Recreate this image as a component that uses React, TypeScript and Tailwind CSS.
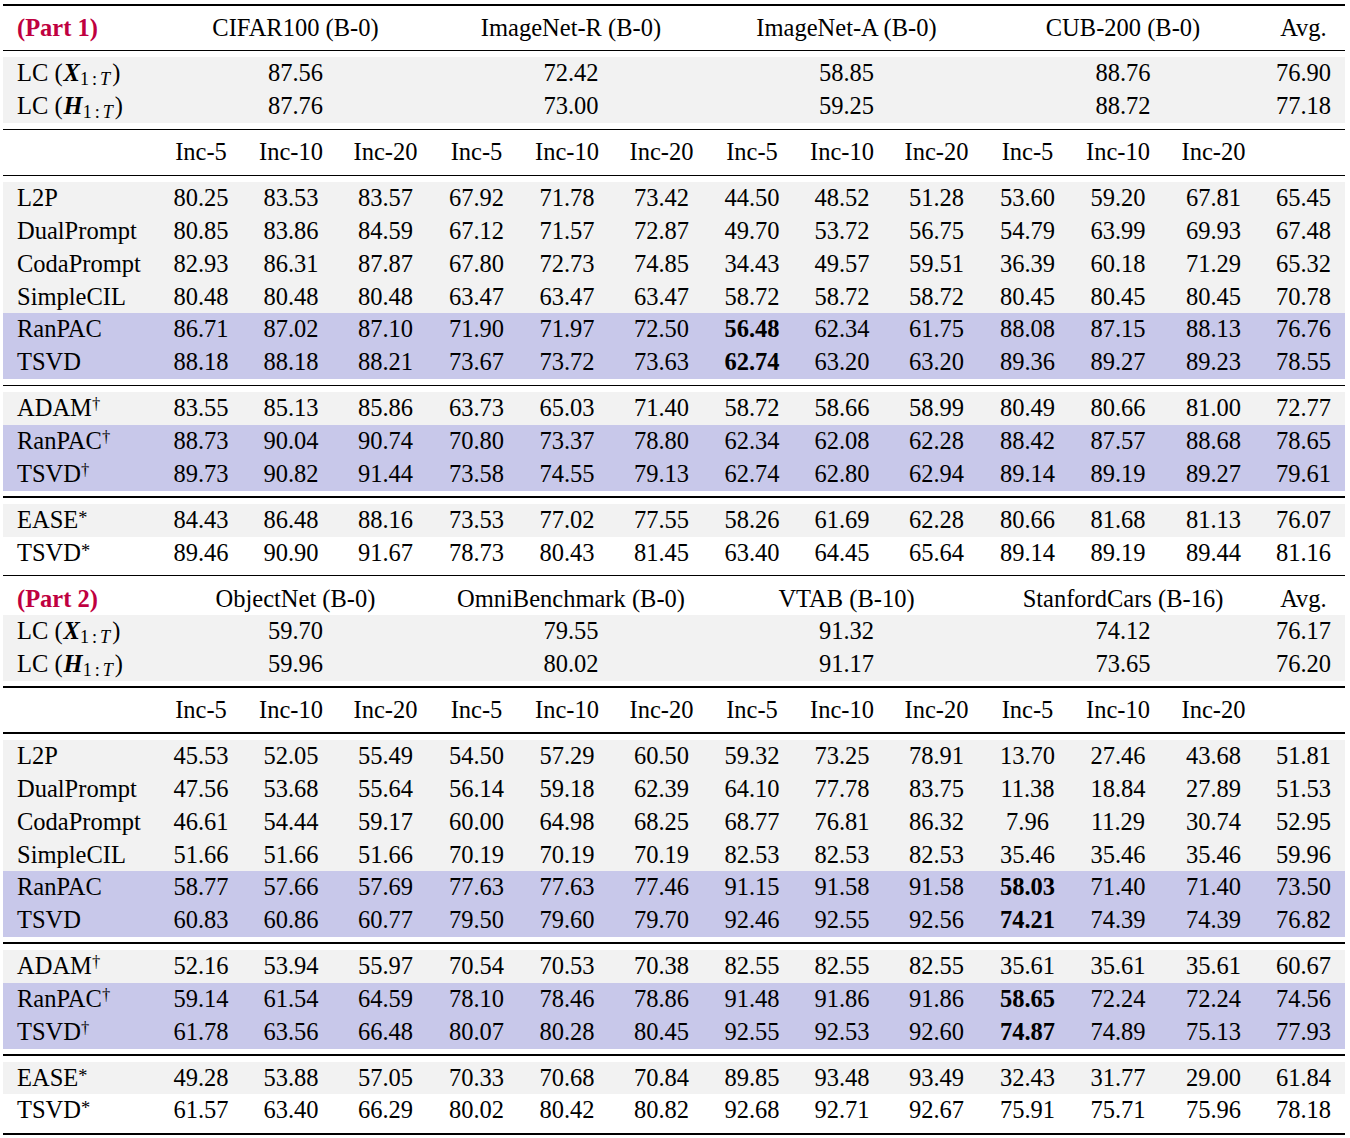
import React from "react";

const ROW =
  "grid grid-cols-[155px_86px_94px_95px_87px_94px_95px_86px_94px_95px_87px_94px_97px_83px] h-[32.8px] leading-[32.8px]";
const GRAY = "bg-[#f2f2f2]";
const PURPLE = "bg-[#c8c8ea]";

type Mark = "dag" | "ast" | undefined;
type DataRow = { name: string; mark?: Mark; vals: string[]; bg: string };

type Part = {
  label: string;
  datasets: string[];
  headerRule: boolean;
  lc: string[][];
  g1: DataRow[];
  g2: DataRow[];
  g3: DataRow[];
};

const r = (name: string, mark: Mark, s: string, bg: string): DataRow => ({
  name,
  mark,
  vals: s.split(" "),
  bg,
});

const part1: Part = {
  label: "(Part 1)",
  datasets: ["CIFAR100 (B-0)", "ImageNet-R (B-0)", "ImageNet-A (B-0)", "CUB-200 (B-0)"],
  headerRule: true,
  lc: [
    ["87.56", "72.42", "58.85", "88.76", "76.90"],
    ["87.76", "73.00", "59.25", "88.72", "77.18"],
  ],
  g1: [
    r("L2P", undefined, "80.25 83.53 83.57 67.92 71.78 73.42 44.50 48.52 51.28 53.60 59.20 67.81 65.45", GRAY),
    r("DualPrompt", undefined, "80.85 83.86 84.59 67.12 71.57 72.87 49.70 53.72 56.75 54.79 63.99 69.93 67.48", GRAY),
    r("CodaPrompt", undefined, "82.93 86.31 87.87 67.80 72.73 74.85 34.43 49.57 59.51 36.39 60.18 71.29 65.32", GRAY),
    r("SimpleCIL", undefined, "80.48 80.48 80.48 63.47 63.47 63.47 58.72 58.72 58.72 80.45 80.45 80.45 70.78", GRAY),
    r("RanPAC", undefined, "86.71 87.02 87.10 71.90 71.97 72.50 !56.48 62.34 61.75 88.08 87.15 88.13 76.76", PURPLE),
    r("TSVD", undefined, "88.18 88.18 88.21 73.67 73.72 73.63 !62.74 63.20 63.20 89.36 89.27 89.23 78.55", PURPLE),
  ],
  g2: [
    r("ADAM", "dag", "83.55 85.13 85.86 63.73 65.03 71.40 58.72 58.66 58.99 80.49 80.66 81.00 72.77", GRAY),
    r("RanPAC", "dag", "88.73 90.04 90.74 70.80 73.37 78.80 62.34 62.08 62.28 88.42 87.57 88.68 78.65", PURPLE),
    r("TSVD", "dag", "89.73 90.82 91.44 73.58 74.55 79.13 62.74 62.80 62.94 89.14 89.19 89.27 79.61", PURPLE),
  ],
  g3: [
    r("EASE", "ast", "84.43 86.48 88.16 73.53 77.02 77.55 58.26 61.69 62.28 80.66 81.68 81.13 76.07", GRAY),
    r("TSVD", "ast", "89.46 90.90 91.67 78.73 80.43 81.45 63.40 64.45 65.64 89.14 89.19 89.44 81.16", "bg-white"),
  ],
};

const part2: Part = {
  label: "(Part 2)",
  datasets: ["ObjectNet (B-0)", "OmniBenchmark (B-0)", "VTAB (B-10)", "StanfordCars (B-16)"],
  headerRule: false,
  lc: [
    ["59.70", "79.55", "91.32", "74.12", "76.17"],
    ["59.96", "80.02", "91.17", "73.65", "76.20"],
  ],
  g1: [
    r("L2P", undefined, "45.53 52.05 55.49 54.50 57.29 60.50 59.32 73.25 78.91 13.70 27.46 43.68 51.81", GRAY),
    r("DualPrompt", undefined, "47.56 53.68 55.64 56.14 59.18 62.39 64.10 77.78 83.75 11.38 18.84 27.89 51.53", GRAY),
    r("CodaPrompt", undefined, "46.61 54.44 59.17 60.00 64.98 68.25 68.77 76.81 86.32 7.96 11.29 30.74 52.95", GRAY),
    r("SimpleCIL", undefined, "51.66 51.66 51.66 70.19 70.19 70.19 82.53 82.53 82.53 35.46 35.46 35.46 59.96", GRAY),
    r("RanPAC", undefined, "58.77 57.66 57.69 77.63 77.63 77.46 91.15 91.58 91.58 !58.03 71.40 71.40 73.50", PURPLE),
    r("TSVD", undefined, "60.83 60.86 60.77 79.50 79.60 79.70 92.46 92.55 92.56 !74.21 74.39 74.39 76.82", PURPLE),
  ],
  g2: [
    r("ADAM", "dag", "52.16 53.94 55.97 70.54 70.53 70.38 82.55 82.55 82.55 35.61 35.61 35.61 60.67", GRAY),
    r("RanPAC", "dag", "59.14 61.54 64.59 78.10 78.46 78.86 91.48 91.86 91.86 !58.65 72.24 72.24 74.56", PURPLE),
    r("TSVD", "dag", "61.78 63.56 66.48 80.07 80.28 80.45 92.55 92.53 92.60 !74.87 74.89 75.13 77.93", PURPLE),
  ],
  g3: [
    r("EASE", "ast", "49.28 53.88 57.05 70.33 70.68 70.84 89.85 93.48 93.49 32.43 31.77 29.00 61.84", GRAY),
    r("TSVD", "ast", "61.57 63.40 66.29 80.02 80.42 80.82 92.68 92.71 92.67 75.91 75.71 75.96 78.18", "bg-white"),
  ],
};

function MidRule() {
  return <div className="mt-[5.5px] mb-[6.2px] h-[1.5px] bg-black" />;
}

function MethodName({ name, mark }: { name: string; mark?: Mark }) {
  return (
    <div className="pl-[14px] whitespace-nowrap">
      {name}
      {mark === "dag" && (
        <span className="relative top-[-0.42em] text-[0.68em] leading-none">†</span>
      )}
      {mark === "ast" && (
        <span className="relative top-[-0.22em] text-[0.75em] leading-none">*</span>
      )}
    </div>
  );
}

function Num({ v }: { v: string }) {
  const bold = v.startsWith("!");
  return (
    <div className={bold ? "text-center font-bold" : "text-center"}>{bold ? v.slice(1) : v}</div>
  );
}

function LCLabel({ sym }: { sym: string }) {
  return (
    <div className="pl-[14px] whitespace-nowrap">
      LC (<span className="ml-[1px] font-bold italic">{sym}</span>
      <span className="relative top-[0.22em] text-[0.74em] leading-none">
        1<span className="mx-[3px]">:</span>
        <span className="italic">T</span>
      </span>
      <span className="ml-[2px]">)</span>
    </div>
  );
}

function Header({ part }: { part: Part }) {
  return (
    <div className={ROW}>
      <div className="pl-[14px] font-bold text-[#bf0040] whitespace-nowrap">{part.label}</div>
      {part.datasets.map((d) => (
        <div key={d} className="col-span-3 text-center whitespace-nowrap">
          {d}
        </div>
      ))}
      <div className="text-center">Avg.</div>
    </div>
  );
}

function IncHeader() {
  const incs = ["Inc-5", "Inc-10", "Inc-20"];
  return (
    <div className={ROW}>
      <div />
      {[0, 1, 2, 3].map((g) =>
        incs.map((t) => (
          <div key={`${g}-${t}`} className="text-center">
            {t}
          </div>
        ))
      )}
      <div />
    </div>
  );
}

function Row({ row }: { row: DataRow }) {
  return (
    <div className={`${ROW} ${row.bg}`}>
      <MethodName name={row.name} mark={row.mark} />
      {row.vals.map((v, i) => (
        <Num key={i} v={v} />
      ))}
    </div>
  );
}

function PartBlock({ part }: { part: Part }) {
  return (
    <>
      <Header part={part} />
      {part.headerRule && <MidRule />}
      {part.lc.map((vals, i) => (
        <div key={i} className={`${ROW} ${GRAY}`}>
          <LCLabel sym={i === 0 ? "X" : "H"} />
          {vals.slice(0, 4).map((v, j) => (
            <div key={j} className="col-span-3 text-center">
              {v}
            </div>
          ))}
          <div className="text-center">{vals[4]}</div>
        </div>
      ))}
      <MidRule />
      <IncHeader />
      <MidRule />
      {part.g1.map((row, i) => (
        <Row key={i} row={row} />
      ))}
      <MidRule />
      {part.g2.map((row, i) => (
        <Row key={i} row={row} />
      ))}
      <MidRule />
      {part.g3.map((row, i) => (
        <Row key={i} row={row} />
      ))}
    </>
  );
}

export default function App() {
  return (
    <div className="w-[1350px] h-[1138px] bg-white text-black font-['Liberation_Serif',serif] text-[24.5px] overflow-hidden">
      <div className="ml-[3px] w-[1342px] pt-[4px] flex flex-col">
        <div className="h-[2px] bg-black mb-[5.5px]" />
        <PartBlock part={part1} />
        <MidRule />
        <PartBlock part={part2} />
        <div className="mt-[5.5px] h-[2px] bg-black" />
      </div>
    </div>
  );
}
